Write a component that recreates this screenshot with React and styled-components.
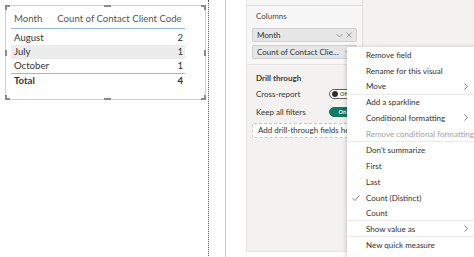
import React from "react";
import styled, { createGlobalStyle } from "styled-components";

const Global = createGlobalStyle`
  html, body { margin: 0; padding: 0; background: #fff; }
  body { font-family: Lato, "Open Sans", sans-serif; color: #252423; white-space: nowrap; }
`;

const Screen = styled.div`
  position: relative;
  display: flex;
  width: 474px;
  height: 257px;
  overflow: hidden;
`;

const Canvas = styled.div`
  width: 203px;
  height: 257px;
  padding: 5px 0 0 5px;
  border-right: 1px dotted #555;
`;

const Gutter = styled.div`
  width: 16px;
  border-right: 1px solid #c8c8c8;
`;

const Strip = styled.div`
  width: 20px;
`;

const Visual = styled.div`
  position: relative;
  width: 201px;
  height: 95px;
  border: 1px solid #d0d0d0;
  box-sizing: border-box;
  padding: 6px 0 0 5px;
`;

const Handle = styled.span`
  position: absolute;
  background: #8a8a8a;
  ${(p) => p.$pos}
`;

const Table = styled.div`
  width: 174px;
  font-size: 9.6px;
`;

const Row = styled.div`
  display: flex;
  justify-content: space-between;
  height: 14px;
  line-height: 14px;
  padding: 0 2px 0 3px;
  background: ${(p) => (p.$shade ? "#ececec" : "transparent")};
  border-bottom: ${(p) => (p.$line ? "1px solid #8fbbe6" : "none")};
  font-weight: ${(p) => (p.$bold ? 700 : 400)};
  color: ${(p) => (p.$head ? "#555" : "#333")};
`;

const HeadRow = styled(Row)`
  height: 16px;
  margin-bottom: 2px;
  justify-content: flex-start;
  gap: 15px;
`;

const Pane = styled.div`
  width: 115px;
  height: 251px;
  background: #f3f2f1;
  border-left: 1px solid #e8e6e4;
  border-right: 1px solid #e1dfdd;
  border-bottom: 1px solid #e8e6e4;
  display: flex;
  flex-direction: column;
  font-size: 8px;
  color: #323130;
`;

const PaneTop = styled.div`
  height: 5px;
  background: #f6f6f6;
  border-bottom: 1px solid #e1dfdd;
`;

const Well = styled.div`
  padding: 3px 5px 5px 5px;
  background: #f7f7f7;
  border-bottom: 1px solid #e6e4e2;
`;

const Section = styled.div`
  padding: 6px 5px 0 5px;
`;

const Label = styled.div`
  height: 14px;
  line-height: 14px;
  padding-left: 4px;
  margin-bottom: ${(p) => p.$gap || 0}px;
  font-weight: ${(p) => (p.$bold ? 700 : 400)};
  color: ${(p) => (p.$bold ? "#3b3a39" : "#484644")};
`;

const Field = styled.div`
  display: flex;
  align-items: center;
  justify-content: space-between;
  box-sizing: border-box;
  height: 14px;
  margin-bottom: 3px;
  padding: 0 4px;
  background: #e6e6e6;
  border: 1px solid #d2d0ce;
  border-radius: 2px;
  color: #323130;
  &:last-child { margin-bottom: 0; }
`;

const FieldIcons = styled.span`
  display: flex;
  align-items: center;
  gap: 3px;
`;

const OptRow = styled.div`
  display: flex;
  align-items: center;
  justify-content: space-between;
  height: 18px;
  padding-left: 4px;
`;

const Toggle = styled.span`
  display: inline-flex;
  align-items: center;
  gap: 2px;
  width: 28px;
  height: 10px;
  box-sizing: border-box;
  border-radius: 6px;
  padding: 0 2px;
  font-size: 5.5px;
  font-weight: 700;
  flex-direction: ${(p) => (p.$on ? "row" : "row-reverse")};
  justify-content: flex-end;
  background: ${(p) => (p.$on ? "#117865" : "#fff")};
  border: 1px solid ${(p) => (p.$on ? "#117865" : "#605e5c")};
  color: ${(p) => (p.$on ? "#fff" : "#605e5c")};
  &::after {
    content: "";
    width: 6px;
    height: 6px;
    border-radius: 50%;
    background: ${(p) => (p.$on ? "#fff" : "#323130")};
  }
`;

const DropZone = styled.div`
  box-sizing: border-box;
  height: 15px;
  line-height: 13px;
  margin-top: 2px;
  padding-left: 5px;
  background: #fff;
  border: 1px dashed #c8c6c4;
  border-radius: 2px;
  overflow: hidden;
`;

const Side = styled.div`
  flex: 1;
  background: #f3f2f1;
`;

const Menu = styled.div`
  position: absolute;
  left: 347px;
  top: 47px;
  width: 140px;
  height: 215px;
  background: #fff;
  box-shadow: 0 1px 5px rgba(0, 0, 0, 0.25);
  font-size: 8px;
`;

const Item = styled.div`
  position: relative;
  box-sizing: border-box;
  display: flex;
  align-items: center;
  height: 15.85px;
  padding-left: 19px;
  color: ${(p) => (p.$disabled ? "#a19f9d" : "#323130")};
  border-bottom: ${(p) => (p.$sep ? "1px solid #edebe9" : "none")};
`;

const Chevron = styled.svg`
  position: absolute;
  left: 117px;
  top: 4px;
`;

const Check = styled.svg`
  position: absolute;
  left: 5px;
  top: 5px;
`;

const Glyph = ({ d, w = 7, h = 5 }) => (
  <svg width={w} height={h} viewBox={`0 0 ${w} ${h}`}>
    <path d={d} fill="none" stroke="#8a8886" strokeWidth="0.8" />
  </svg>
);

const down = "M0.5 1 L3.5 4 L6.5 1";
const cross = "M0.5 0.5 L5.5 5.5 M5.5 0.5 L0.5 5.5";

const rows = [
  { m: "August", v: 2 },
  { m: "July", v: 1, shade: true },
  { m: "October", v: 1, line: true },
];

const items = [
  { t: "Remove field" },
  { t: "Rename for this visual" },
  { t: "Move", sub: true, sep: true },
  { t: "Add a sparkline" },
  { t: "Conditional formatting", sub: true },
  { t: "Remove conditional formatting", disabled: true, sep: true },
  { t: "Don't summarize" },
  { t: "First" },
  { t: "Last" },
  { t: "Count (Distinct)", check: true },
  { t: "Count", sep: true },
  { t: "Show value as", sub: true, sep: true },
  { t: "New quick measure" },
];

const handles = [
  "left:-1px;top:-1px;width:5px;height:2px;",
  "left:-1px;top:-1px;width:2px;height:5px;",
  "right:-1px;top:-1px;width:5px;height:2px;",
  "right:-1px;top:-1px;width:2px;height:5px;",
  "left:-1px;bottom:-1px;width:5px;height:2px;",
  "left:-1px;bottom:-1px;width:2px;height:5px;",
  "right:-1px;bottom:-1px;width:5px;height:2px;",
  "right:-1px;bottom:-1px;width:2px;height:5px;",
  "left:98px;top:-1px;width:7px;height:2px;",
  "left:98px;bottom:-1px;width:7px;height:2px;",
  "left:-1px;top:44px;width:2px;height:6px;",
  "right:-1px;top:44px;width:2px;height:6px;",
];

export default function App() {
  return (
    <Screen>
      <Global />
      <Canvas>
        <Visual>
          {handles.map((h, i) => (
            <Handle key={i} $pos={h} />
          ))}
          <Table>
            <HeadRow $head $line>
              <span>Month</span>
              <span>Count of Contact Client Code</span>
            </HeadRow>
            {rows.map((r) => (
              <Row key={r.m} $shade={r.shade} $line={r.line}>
                <span>{r.m}</span>
                <span>{r.v}</span>
              </Row>
            ))}
            <Row $bold>
              <span>Total</span>
              <span>4</span>
            </Row>
          </Table>
        </Visual>
      </Canvas>
      <Gutter />
      <Strip />
      <Pane>
        <PaneTop />
        <Well>
          <Label $gap={5}>Columns</Label>
          <Field>
            <span>Month</span>
            <FieldIcons>
              <Glyph d={down} />
              <Glyph d={cross} w={6} h={6} />
            </FieldIcons>
          </Field>
          <Field>
            <span>Count of Contact Clie...</span>
            <FieldIcons>
              <Glyph d={down} />
            </FieldIcons>
          </Field>
        </Well>
        <Section>
          <Label $bold>Drill through</Label>
          <OptRow>
            <span>Cross-report</span>
            <Toggle>Off</Toggle>
          </OptRow>
          <OptRow>
            <span>Keep all filters</span>
            <Toggle $on>On</Toggle>
          </OptRow>
          <DropZone>Add drill-through fields here</DropZone>
        </Section>
      </Pane>
      <Side />
      <Menu>
        {items.map((it) => (
          <Item key={it.t} $sep={it.sep} $disabled={it.disabled}>
            {it.check && (
              <Check width="8" height="6" viewBox="0 0 8 6">
                <path d="M0.5 3 L3 5.5 L7.5 0.5" fill="none" stroke="#605e5c" strokeWidth="0.8" />
              </Check>
            )}
            {it.t}
            {it.sub && (
              <Chevron width="4" height="7" viewBox="0 0 4 7">
                <path d="M0.5 0.5 L3.5 3.5 L0.5 6.5" fill="none" stroke="#605e5c" strokeWidth="0.8" />
              </Chevron>
            )}
          </Item>
        ))}
      </Menu>
    </Screen>
  );
}
